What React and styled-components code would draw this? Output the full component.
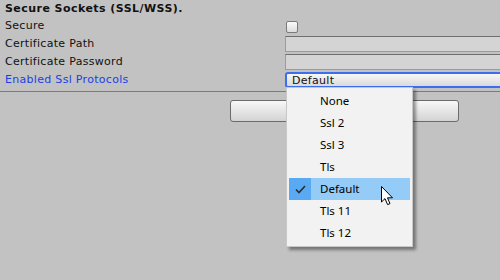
import React from 'react';
import styled, { createGlobalStyle } from 'styled-components';

const protocols = ['None', 'Ssl 2', 'Ssl 3', 'Tls', 'Default', 'Tls 11', 'Tls 12'];
const selected = 'Default';

const App = () => {
    return (
        <Page>
            <GlobalStyle />
            <Section>
                <Title>Secure Sockets (SSL/WSS).</Title>
                <Row>
                    <Label>Secure</Label>
                    <Checkbox />
                </Row>
                <Row>
                    <Label>Certificate Path</Label>
                    <TextField />
                </Row>
                <Row>
                    <Label>Certificate Password</Label>
                    <TextField />
                </Row>
                <Row>
                    <Label focused>Enabled Ssl Protocols</Label>
                    <Dropdown>{selected}</Dropdown>
                </Row>
            </Section>
            <Separator />
            <ButtonRow>
                <Button />
            </ButtonRow>

            <Menu>
                {protocols.map((p) => (
                    <MenuItem key={p} active={p === selected}>
                        <CheckCol active={p === selected}>
                            {p === selected && (
                                <svg width="11" height="9" viewBox="0 0 11 9">
                                    <path d="M1 4.5 L4 7.5 L10 1" fill="none" stroke="#2b2b2b" strokeWidth="1.6" />
                                </svg>
                            )}
                        </CheckCol>
                        <ItemText>{p}</ItemText>
                    </MenuItem>
                ))}
            </Menu>

            <Cursor width="13" height="20" viewBox="0 0 13 20">
                <path
                    d="M0.5 0.5 L0.5 16 L4 12.6 L6.6 18.6 L9 17.6 L6.5 11.8 L11.5 11.8 Z"
                    fill="#fff"
                    stroke="#000"
                    strokeWidth="1"
                    strokeLinejoin="round"
                />
            </Cursor>
        </Page>
    );
};

export default App;

const GlobalStyle = createGlobalStyle`
    html, body {
        margin: 0;
        padding: 0;
        background: #c2c2c2;
    }
`;

const Page = styled.div`
    position: relative;
    width: 500px;
    height: 280px;
    overflow: hidden;
    background: #c2c2c2;
    font-family: "DejaVu Sans", Verdana, sans-serif;
    font-size: 11px;
    letter-spacing: 0.3px;
    color: #111;
`;

const Section = styled.div`
    display: flex;
    flex-direction: column;
    gap: 2px;
    padding: 0 0 0 5px;
`;

const Title = styled.div`
    font-weight: bold;
    letter-spacing: 0.45px;
    height: 16px;
    line-height: 18px;
`;

const Row = styled.div`
    display: flex;
    align-items: center;
    height: 16px;
`;

const Label = styled.div`
    width: 280px;
    flex-shrink: 0;
    color: ${(p) => (p.focused ? '#1a3fe6' : '#111')};
    line-height: 16px;
`;

const Checkbox = styled.div`
    width: 10px;
    height: 10px;
    margin: 2px 0 0 1px;
    border: 1px solid #7a7a7a;
    border-radius: 2px;
    background: linear-gradient(#fbfbfb, #dcdcdc);
`;

const TextField = styled.div`
    flex: 1;
    height: 14px;
    margin-right: -4px;
    background: #d4d4d4;
    border: 1px solid #9b9b9b;
    border-top-color: #6e6e6e;
`;

const Dropdown = styled.div`
    flex: 1;
    height: 12px;
    margin-right: -6px;
    padding: 0 0 0 5px;
    line-height: 13px;
    border: 2px solid #3d6ef0;
    border-radius: 3px;
    background: linear-gradient(#f8f8f8, #dadada);
    color: #111;
`;

const Separator = styled.div`
    height: 1px;
    margin-top: 3px;
    background: #7b7b7b;
`;

const ButtonRow = styled.div`
    display: flex;
    padding: 8px 0 0 230px;
`;

const Button = styled.div`
    width: 227px;
    height: 20px;
    border: 1px solid #6b6b6b;
    border-radius: 3px;
    background: linear-gradient(#f8f8f8, #d3d3d3);
`;

const Menu = styled.div`
    position: absolute;
    left: 286px;
    top: 87px;
    width: 121px;
    padding: 2px 2px;
    background: #f2f2f2;
    border: 1px solid #c8c8c8;
    box-shadow: 3px 3px 3px rgba(0, 0, 0, 0.4);
    font-family: "Noto Sans", "Open Sans", sans-serif;
    font-size: 11.5px;
    letter-spacing: 0;
    color: #000;
`;

const MenuItem = styled.div`
    display: flex;
    align-items: center;
    height: 22px;
    background: ${(p) => (p.active ? '#94cbf7' : 'transparent')};
`;

const CheckCol = styled.div`
    width: 22px;
    height: 22px;
    display: flex;
    align-items: center;
    justify-content: center;
    background: ${(p) => (p.active ? '#5aaaf3' : 'transparent')};
`;

const ItemText = styled.span`
    padding-left: 9px;
    line-height: 22px;
`;

const Cursor = styled.svg`
    position: absolute;
    left: 381px;
    top: 186px;
`;
